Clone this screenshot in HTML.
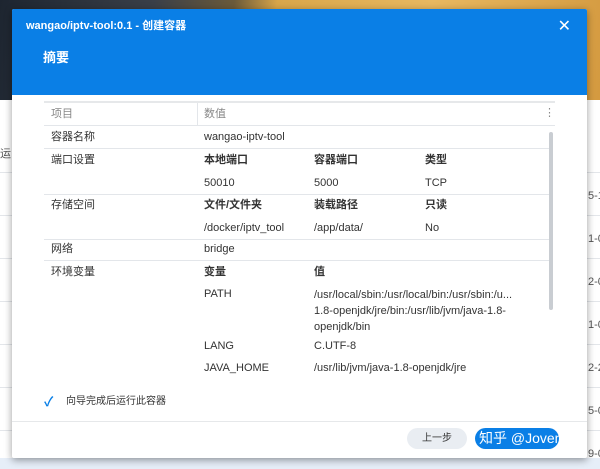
<!DOCTYPE html>
<html><head><meta charset="utf-8"><style>
*{margin:0;padding:0;box-sizing:border-box}
body{width:600px;height:469px;overflow:hidden;position:relative;background:#fff;font-family:"Liberation Sans","Noto Sans CJK SC",sans-serif;font-size:11px;color:#333}
.bgtop{position:absolute;left:0;top:0;width:600px;height:100px;background:linear-gradient(100deg,#1d2530 0%,#3a3f48 25%,#6b5a3a 38%,#d9a64a 45%,#e8b860 70%,#d49a40 100%)}
.bgrow{position:absolute;left:0;width:600px;border-top:1px solid #e3e6ea}
.side{position:absolute;font-size:11px;color:#555;white-space:nowrap}
.dlg{position:absolute;left:12px;top:9px;width:575px;height:449px;background:#fff;box-shadow:0 2px 8px rgba(0,0,0,.4);border-radius:2px;overflow:hidden}
.hd{height:86px;background:#0a7fe6;color:#fff;position:relative}
.hd .t{position:absolute;left:14px;top:10px;font-size:11px;font-weight:bold;line-height:14px}
.hd .s{position:absolute;left:31px;top:41px;font-size:13px;font-weight:bold;line-height:16px}
.hd .x{position:absolute;right:16px;top:7px;font-size:16px}
.tbl{position:absolute;left:32px;top:92px;width:511px;height:300px;border-top:2px solid #e6e8ea}
.th{height:23px;border-bottom:1px solid #e3e6ea;color:#888;position:relative}
.c{position:absolute;white-space:nowrap;line-height:13px}
.sep{position:absolute;left:153px;top:0;height:23px;border-left:1px solid #e3e6ea}
.row{position:absolute;left:0;width:505px;border-top:1px solid #e3e6ea}
.b{font-weight:bold}
.sb{position:absolute;left:537px;top:123px;width:4px;height:178px;background:#c9cdd2;border-radius:2px}
.foot{position:absolute;left:0;top:412px;width:575px;border-top:1px solid #e6e8ea}
.btn1{position:absolute;left:407px;top:428px;width:60px;height:21px;background:#e9edf2;border-radius:11px;text-align:center;line-height:21px;font-size:10px;white-space:nowrap}
.btn2{position:absolute;left:475px;top:428px;width:84px;height:21px;background:#0a7fe6;border-radius:11px;color:#fff;line-height:21px;font-size:14px;padding-left:4px;white-space:nowrap;overflow:visible}
</style></head><body>
<div class="bgtop"></div>
<div class="bgrow" style="top:172px"></div>
<div class="bgrow" style="top:215px"></div>
<div class="bgrow" style="top:258px"></div>
<div class="bgrow" style="top:301px"></div>
<div class="bgrow" style="top:344px"></div>
<div class="bgrow" style="top:387px"></div>
<div class="bgrow" style="top:430px"></div>
<div class="side" style="left:0;top:145px">运</div>
<div class="side" style="left:588px;top:190px">5-1</div>
<div class="side" style="left:588px;top:233px">1-0</div>
<div class="side" style="left:588px;top:276px">2-0</div>
<div class="side" style="left:588px;top:319px">1-0</div>
<div class="side" style="left:588px;top:362px">2-2</div>
<div class="side" style="left:588px;top:405px">5-0</div>
<div class="side" style="left:588px;top:448px">9-0</div>
<div style="position:absolute;left:0;top:458px;width:600px;height:11px;background:#e6eef8"></div>
<div class="dlg">
<div class="hd"><div class="t">wangao/iptv-tool:0.1 - 创建容器</div><div class="s">摘要</div><div class="x">✕</div></div>
<div class="tbl">
<div class="th"><span class="c" style="left:7px;top:5px">项目</span><span class="sep"></span><span class="c" style="left:160px;top:5px">数值</span><span class="c" style="left:500px;top:4px">⋮</span></div>
<span class="c" style="left:7px;top:28px">容器名称</span><span class="c" style="left:160px;top:28px">wangao-iptv-tool</span>
<div class="row" style="top:45px"></div>
<span class="c" style="left:7px;top:51px">端口设置</span><span class="c b" style="left:160px;top:51px">本地端口</span><span class="c b" style="left:270px;top:51px">容器端口</span><span class="c b" style="left:381px;top:51px">类型</span>
<span class="c" style="left:160px;top:74px">50010</span><span class="c" style="left:270px;top:74px">5000</span><span class="c" style="left:381px;top:74px">TCP</span>
<div class="row" style="top:91px"></div>
<span class="c" style="left:7px;top:96px">存储空间</span><span class="c b" style="left:160px;top:96px">文件/文件夹</span><span class="c b" style="left:270px;top:96px">装载路径</span><span class="c b" style="left:381px;top:96px">只读</span>
<span class="c" style="left:160px;top:119px">/docker/iptv_tool</span><span class="c" style="left:270px;top:119px">/app/data/</span><span class="c" style="left:381px;top:119px">No</span>
<div class="row" style="top:136px"></div>
<span class="c" style="left:7px;top:140px">网络</span><span class="c" style="left:160px;top:140px">bridge</span>
<div class="row" style="top:157px"></div>
<span class="c" style="left:7px;top:163px">环境变量</span><span class="c b" style="left:160px;top:163px">变量</span><span class="c b" style="left:270px;top:163px">值</span>
<span class="c" style="left:160px;top:185px">PATH</span>
<span class="c" style="left:270px;top:185px;line-height:16px;margin-top:-1px">/usr/local/sbin:/usr/local/bin:/usr/sbin:/u...<br>1.8-openjdk/jre/bin:/usr/lib/jvm/java-1.8-<br>openjdk/bin</span>
<span class="c" style="left:160px;top:237px">LANG</span><span class="c" style="left:270px;top:237px">C.UTF-8</span>
<span class="c" style="left:160px;top:259px">JAVA_HOME</span><span class="c" style="left:270px;top:259px">/usr/lib/jvm/java-1.8-openjdk/jre</span>
</div>
<div class="sb"></div>
<span class="c" style="left:32px;top:385px;color:#0a7fe6;font-size:13px;font-weight:bold;line-height:16px">✓</span>
<span class="c" style="left:54px;top:386px;font-size:10px">向导完成后运行此容器</span>
<div class="foot"></div>
</div>
<div class="btn1">上一步</div>
<div class="btn2">知乎 @Joveng</div>
</body></html>
